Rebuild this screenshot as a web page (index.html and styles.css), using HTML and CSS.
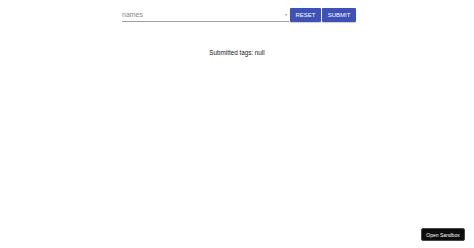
FILE: index.html
```html
<!DOCTYPE html>
<html>
<head>
<meta charset="utf-8">
<link rel="stylesheet" href="styles.css">
</head>
<body>
<div class="app">
  <form class="bar">
    <div class="select">
      <span class="placeholder">names</span>
      <svg class="arrow" width="6" height="6" viewBox="0 0 24 24"><path d="M7 10l5 5 5-5z" fill="#757575"/></svg>
    </div>
    <div class="btns">
      <button type="button" class="btn reset">RESET</button>
      <button type="button" class="btn submit">SUBMIT</button>
    </div>
  </form>
  <p class="result">Submitted tags: null</p>
</div>
<a class="sandbox">Open Sandbox</a>
</body>
</html>
```
FILE: styles.css
```css
html, body { margin: 0; padding: 0; background: #fff; }
body { font-family: "Liberation Sans", Arial, sans-serif; width: 474px; height: 248px; position: relative; overflow: hidden; }
.app { display: flex; flex-direction: column; align-items: center; padding-top: 8px; }
.bar { display: flex; align-items: flex-start; margin-left: 4px; }
.select { width: 167px; border-bottom: 1px solid #a0a0a0; display: flex; align-items: center; justify-content: space-between; box-sizing: border-box; height: 14px; }
.placeholder { font-size: 7px; color: #888; }
.btns { display: flex; margin-left: 1px; }
.btn { background: #3f51b5; color: #fff; border: none; height: 14px; padding: 0; font-family: "Liberation Sans", Arial, sans-serif; font-size: 6px; border-radius: 1px; box-shadow: 0 1px 1px rgba(0,0,0,0.2); margin: 0; display: flex; align-items: center; justify-content: center; }
.reset { width: 31px; }
.submit { width: 34px; }
.btn + .btn { margin-left: 1px; }
.result { margin: 27px 0 0 0; font-size: 6.3px; color: #222; }
.sandbox { position: absolute; left: 421px; top: 228px; width: 44px; height: 13px; background: #0d0d0d; color: #fff; font-size: 5px; border-radius: 2px; display: flex; align-items: center; justify-content: center; border: 1px solid #444; box-sizing: border-box; }
```
